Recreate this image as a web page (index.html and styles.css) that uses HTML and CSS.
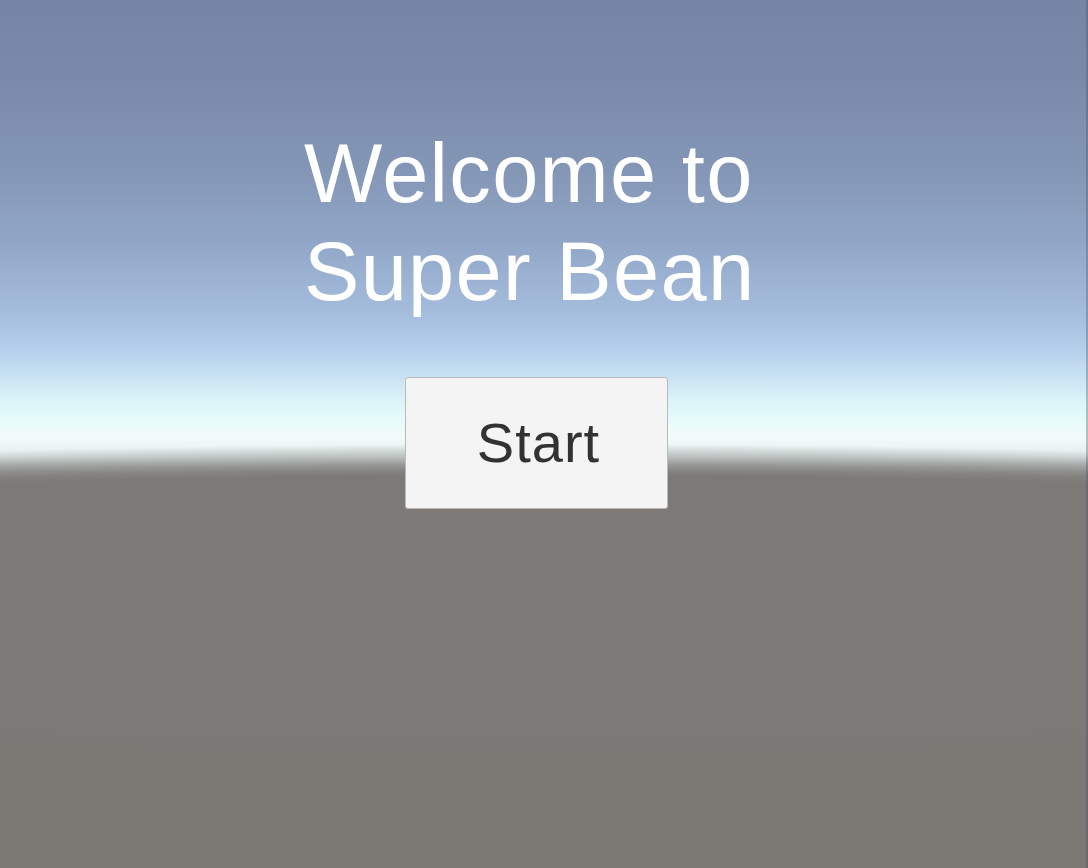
FILE: index.html
```html
<!DOCTYPE html>
<html lang="en">
<head>
<meta charset="utf-8">
<title>Super Bean</title>
<link rel="stylesheet" href="styles.css">
</head>
<body>
  <main class="menu">
    <h1 class="menu-title">Welcome to<br>Super Bean</h1>
    <button class="menu-button" type="button">Start</button>
  </main>
</body>
</html>
```

FILE: styles.css
```css
html, body {
  margin: 0;
  padding: 0;
}

body {
  width: 1088px;
  height: 868px;
  overflow: hidden;
  font-family: "Liberation Sans", Arial, sans-serif;
  /* curved ground fading into a procedural sky */
  background:
    radial-gradient(1925px 160px at 50% 604px,
      #7d7976 0%, #7d7976 80%, rgba(125, 121, 118, 0.5) 90%, rgba(125, 121, 118, 0) 100%),
    linear-gradient(to bottom,
      #7585a5 0px,
      #7a8aaa 80px,
      #8496b6 170px,
      #91a6c6 240px,
      #a4bcdc 310px,
      #b6cfec 350px,
      #c9e3f4 378px,
      #dbf4f8 400px,
      #e6fbfa 420px,
      #f3fbfa 438px,
      #dfeceb 458px,
      #b4bfbd 470px,
      #7d7976 488px,
      #7c7874 868px);
  box-shadow: inset -2px 0 0 rgba(70, 80, 100, 0.35);
}

.menu {
  display: flex;
  flex-direction: column;
  align-items: flex-start;
  padding: 125px 0 0 304px;
}

.menu-title {
  margin: 0;
  font-size: 83px;
  font-weight: 400;
  line-height: 98px;
  letter-spacing: 1.3px;
  color: #ffffff;
}

.menu-button {
  margin: 56px 0 0 101px;
  width: 263px;
  height: 132px;
  display: flex;
  align-items: center;
  justify-content: center;
  padding: 0 0 2px 4px;
  background: #f4f4f4;
  border: 1px solid #b9b9b9;
  border-radius: 3px;
  font-family: "Liberation Sans", Arial, sans-serif;
  font-size: 56px;
  letter-spacing: 1px;
  color: #323232;
  cursor: pointer;
}
```
